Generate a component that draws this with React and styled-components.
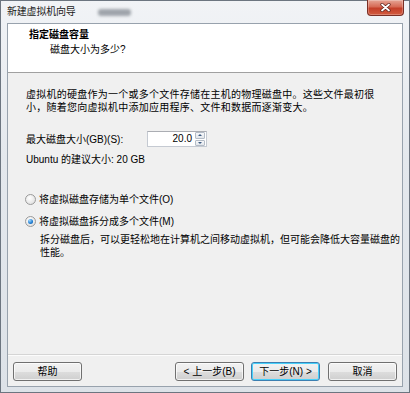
import React from "react";
import styled, { createGlobalStyle, css } from "styled-components";

const GlobalStyle = createGlobalStyle`
  html, body {
    margin: 0;
    padding: 0;
    background: #dfe4ea;
  }
  body {
    font-family: "Liberation Sans", "Noto Sans CJK SC", sans-serif;
    font-size: 10px;
    color: #000;
  }
`;

// 창 프레임
const Window = styled.div`
  width: 410px;
  height: 393px;
  box-sizing: border-box;
  border: 1px solid #6c7580;
  background: linear-gradient(#f1f3f6, #e4e8ed 40%, #dde2e8);
  display: flex;
  flex-direction: column;
`;

const TitleBar = styled.div`
  height: 22px;
  display: flex;
  align-items: flex-start;
  padding-left: 6px;
`;

const TitleText = styled.span`
  line-height: 22px;
  color: #1a1a1a;
  letter-spacing: -0.2px;
`;

const Blur = styled.div`
  width: 33px;
  height: 7px;
  margin: 8px 0 0 22px;
  background: #9fa4ab;
  border-radius: 3px;
  filter: blur(1.8px);
`;

const CloseButton = styled.div`
  margin-left: auto;
  margin-right: 5px;
  margin-top: -1px;
  width: 37px;
  height: 16px;
  box-sizing: border-box;
  border: 1px solid #7a2f25;
  border-top: none;
  border-radius: 0 0 4px 4px;
  background: linear-gradient(#e6a595, #d66a55 45%, #c43f29 55%, #d25c40);
  box-shadow: inset 0 0 0 1px rgba(255, 255, 255, 0.25);
  display: flex;
  align-items: center;
  justify-content: center;
`;

// 클라이언트 영역
const Client = styled.div`
  flex: 1;
  margin: 0 6px 5px 6px;
  border: 1px solid #98a2ad;
  background: #f0f0f0;
  display: flex;
  flex-direction: column;
`;

const Header = styled.div`
  height: 44px;
  background: #fff;
  border-bottom: 1px solid #a0a0a0;
  padding: 4px 0 0 21px;
  box-sizing: content-box;
  line-height: 14px;
`;

const HeaderTitle = styled.div`
  font-weight: bold;
`;

const HeaderSub = styled.div`
  padding-left: 21px;
  margin-top: 1px;
`;

const Body = styled.div`
  flex: 1;
  padding: 15px 0 0 18px;
  line-height: 13px;
`;

const Paragraph = styled.p`
  margin: 0;
  letter-spacing: 0.25px;
`;

const SizeRow = styled.div`
  display: flex;
  align-items: center;
  margin-top: 17px;
  height: 16px;
`;

const SizeLabel = styled.span`
  width: 121px;
`;

const Spin = styled.div`
  display: flex;
  width: 60px;
  height: 16px;
  box-sizing: border-box;
  border: 1px solid #c5cad2;
  border-top-color: #abadb3;
  background: #fff;
`;

const SpinValue = styled.div`
  flex: 1;
  text-align: right;
  padding-right: 3px;
  line-height: 14px;
`;

const SpinButtons = styled.div`
  width: 10px;
  display: flex;
  flex-direction: column;
  gap: 1px;
  padding: 0 1px 0 0;
`;

const SpinButton = styled.div`
  flex: 1;
  border: 1px solid #b4bcc6;
  border-radius: 1px;
  background: linear-gradient(#f7f8fa, #e2e6eb);
  display: flex;
  align-items: center;
  justify-content: center;
  &::after {
    content: "";
    border-left: 2px solid transparent;
    border-right: 2px solid transparent;
    ${(p) =>
      p.$down
        ? css`border-top: 2px solid #3e5c82;`
        : css`border-bottom: 2px solid #3e5c82;`}
  }
`;

const Hint = styled.div`
  margin-top: 6px;
`;

const RadioRow = styled.label`
  display: flex;
  align-items: center;
  gap: 3px;
  height: 13px;
  margin-top: ${(p) => p.$gap}px;
`;

const Radio = styled.span`
  width: 11px;
  height: 11px;
  margin-left: -1px;
  box-sizing: border-box;
  border-radius: 50%;
  border: 1px solid #9a9a9a;
  background: radial-gradient(circle at 40% 35%, #ffffff, #e4e4e4 70%, #d0d0d0);
  display: flex;
  align-items: center;
  justify-content: center;
  &::after {
    content: "";
    display: ${(p) => (p.$checked ? "block" : "none")};
    width: 5px;
    height: 5px;
    border-radius: 50%;
    background: radial-gradient(circle at 35% 30%, #9fd8ff, #1e7bd0 60%, #125aa0);
  }
`;

const Description = styled.p`
  margin: 5px 0 0 14px;
`;

// 하단 버튼
const Separator = styled.div`
  height: 1px;
  background: #d5d5d5;
  border-bottom: 1px solid #fcfcfc;
`;

const Footer = styled.div`
  display: flex;
  gap: 7px;
  padding: 6px 5px 5px 5px;
`;

const Button = styled.div`
  width: 69px;
  height: 19px;
  box-sizing: border-box;
  border: 1px solid #707070;
  border-radius: 3px;
  background: linear-gradient(#f2f2f2, #ebebeb 50%, #dddddd 51%, #cfcfcf);
  box-shadow: inset 0 0 0 1px rgba(255, 255, 255, 0.7);
  display: flex;
  align-items: center;
  justify-content: center;
  line-height: 17px;

  &.help {
    margin-right: auto;
  }

  &.default {
    border-color: #3c7fb1;
    box-shadow: inset 0 0 0 1px #48d1fb;
    margin-right: 1px;
  }
`;

const CloseIcon = () => (
  <svg width="11" height="9" viewBox="0 0 11 9">
    <path d="M2 1.5 L9 7.5 M9 1.5 L2 7.5" stroke="#5a2018" strokeWidth="3.2" strokeLinecap="round" />
    <path d="M2 1.5 L9 7.5 M9 1.5 L2 7.5" stroke="#fff" strokeWidth="1.8" strokeLinecap="round" />
  </svg>
);

export default function App() {
  return (
    <>
      <GlobalStyle />
      <Window>
        <TitleBar>
          <TitleText>新建虚拟机向导</TitleText>
          <Blur />
          <CloseButton>
            <CloseIcon />
          </CloseButton>
        </TitleBar>
        <Client>
          <Header>
            <HeaderTitle>指定磁盘容量</HeaderTitle>
            <HeaderSub>磁盘大小为多少?</HeaderSub>
          </Header>
          <Body>
            <Paragraph>
              虚拟机的硬盘作为一个或多个文件存储在主机的物理磁盘中。这些文件最初很
              <br />
              小，随着您向虚拟机中添加应用程序、文件和数据而逐渐变大。
            </Paragraph>
            <SizeRow>
              <SizeLabel>最大磁盘大小(GB)(S):</SizeLabel>
              <Spin>
                <SpinValue>20.0</SpinValue>
                <SpinButtons>
                  <SpinButton />
                  <SpinButton $down />
                </SpinButtons>
              </Spin>
            </SizeRow>
            <Hint>Ubuntu 的建议大小: 20 GB</Hint>
            <RadioRow $gap={27}>
              <Radio />
              <span>将虚拟磁盘存储为单个文件(O)</span>
            </RadioRow>
            <RadioRow $gap={9}>
              <Radio $checked />
              <span>将虚拟磁盘拆分成多个文件(M)</span>
            </RadioRow>
            <Description>
              拆分磁盘后，可以更轻松地在计算机之间移动虚拟机，但可能会降低大容量磁盘的
              <br />
              性能。
            </Description>
          </Body>
          <Separator />
          <Footer>
            <Button className="help">帮助</Button>
            <Button>&lt; 上一步(B)</Button>
            <Button className="default">下一步(N) &gt;</Button>
            <Button>取消</Button>
          </Footer>
        </Client>
      </Window>
    </>
  );
}
